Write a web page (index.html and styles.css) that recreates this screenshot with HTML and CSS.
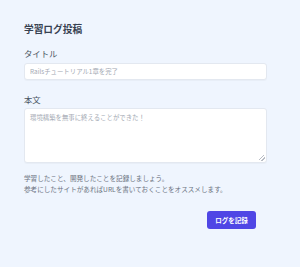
FILE: index.html
```html
<!DOCTYPE html>
<html lang="ja">
<head>
    <meta charset="UTF-8">
    <meta name="viewport" content="width=device-width, initial-scale=1.0">
    <title>学習ログ投稿</title>
    <link rel="stylesheet" href="styles.css">
</head>
<body>
    <div class="wrap">
        <h1 class="ttl">学習ログ投稿</h1>

        <form class="log-form" onsubmit="return false;">
            <div class="field">
                <label class="label" for="title">タイトル</label>
                <input class="input" id="title" type="text" placeholder="Railsチュートリアル1章を完了">
            </div>
            <div class="field field-body">
                <label class="label" for="body">本文</label>
                <textarea class="textarea" id="body" placeholder="環境構築を無事に終えることができた！"></textarea>
            </div>
            <p class="help">
                学習したこと、開発したことを記録しましょう。<br>
                参考にしたサイトがあればURLを書いておくことをオススメします。
            </p>
            <div class="btn-area">
                <button class="btn" type="submit">ログを記録</button>
            </div>
        </form>
    </div>
</body>
</html>
```

FILE: styles.css
```css
*{ margin: 0; padding: 0; box-sizing: border-box;}
body{ background: #eff5fe; font-family: "Noto Sans CJK JP", "Noto Sans", sans-serif; color: #374151;}

.wrap{ padding: 22px 33px 0 24px;}
.ttl{ font-size: 9.7px; line-height: 15px; font-weight: 700; color: #374151;}

.field{ margin-top: 10px;}
.field-body{ margin-top: 13px;}
.label{ display: block; font-size: 8.4px; line-height: 12px; color: #4b5563;}

.input,
.textarea{ display: block; width: 100%; background: #fff; border: 1px solid #e3e8f0; border-radius: 3px; box-shadow: 0 1px 1px rgba(0,0,0,.03); font-family: inherit; font-size: 6.4px; color: #374151; outline: none;}
.input{ height: 17px; margin-top: 4px; padding: 0 5px;}
.textarea{ height: 55px; margin-top: 3px; padding: 4px 5px; resize: vertical; line-height: 10px;}
.textarea::-webkit-resizer{ background: linear-gradient(135deg, transparent 35%, #b9bdc5 35%, #b9bdc5 47%, transparent 47%, transparent 65%, #b9bdc5 65%, #b9bdc5 77%, transparent 77%) no-repeat right 1px bottom 1px / 6px 6px;}
.input::placeholder,
.textarea::placeholder{ color: #a3a9b3;}

.help{ margin-top: 10px; font-size: 6.6px; line-height: 10.5px; color: #6b7280;}

.btn-area{ display: flex; justify-content: flex-end; padding-right: 11px; margin-top: 17px;}
.btn{ width: 49px; height: 18px; border: 0; border-radius: 3px; background: #4f46e5; color: #fff; font-family: inherit; font-size: 6.5px; font-weight: 700; cursor: pointer;}
```
